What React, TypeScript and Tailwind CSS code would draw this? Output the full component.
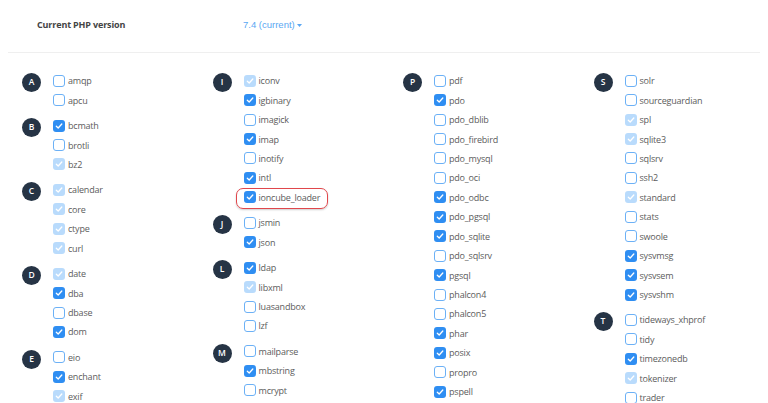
type State = 'on' | 'off' | 'dis';
type Item = { name: string; state: State; mark?: boolean };
type Group = { letter: string; items: Item[] };

const mk = (s: string): Item[] =>
  s.split(' ').map((t) => {
    const [name, st] = t.split(':');
    return { name, state: (st || 'off') as State };
  });

const columns: Group[][] = [
  [
    { letter: 'A', items: mk('amqp apcu') },
    { letter: 'B', items: mk('bcmath:on brotli bz2:dis') },
    { letter: 'C', items: mk('calendar:dis core:dis ctype:dis curl:dis') },
    { letter: 'D', items: mk('date:dis dba:on dbase dom:on') },
    { letter: 'E', items: mk('eio enchant:on exif:dis') },
  ],
  [
    {
      letter: 'I',
      items: [
        ...mk('iconv:dis igbinary:on imagick imap:on inotify intl:on'),
        { name: 'ioncube_loader', state: 'on', mark: true },
      ],
    },
    { letter: 'J', items: mk('jsmin json:on') },
    { letter: 'L', items: mk('ldap:on libxml:dis luasandbox lzf') },
    { letter: 'M', items: mk('mailparse mbstring:on mcrypt') },
  ],
  [
    {
      letter: 'P',
      items: mk(
        'pdf pdo:on pdo_dblib pdo_firebird pdo_mysql pdo_oci pdo_odbc:on pdo_pgsql:on pdo_sqlite:on pdo_sqlsrv pgsql:on phalcon4 phalcon5 phar:on posix:on propro pspell:on'
      ),
    },
  ],
  [
    {
      letter: 'S',
      items: mk(
        'solr sourceguardian spl:dis sqlite3:dis sqlsrv ssh2 standard:dis stats swoole sysvmsg:on sysvsem:on sysvshm:on'
      ),
    },
    { letter: 'T', items: mk('tideways_xhprof tidy timezonedb:on tokenizer:dis trader') },
  ],
];

function Box({ state }: { state: State }) {
  if (state === 'off') {
    return <span className="block w-[12px] h-[12px] rounded-[3px] border-[1.5px] border-[#6cb1f6] bg-white" />;
  }
  return (
    <span
      className={
        'flex items-center justify-center w-[12px] h-[12px] rounded-[3px] ' +
        (state === 'on' ? 'bg-[#2f8ef2]' : 'bg-[#b9dbfc]')
      }
    >
      <svg width="8" height="8" viewBox="0 0 8 8" fill="none">
        <path d="M1.3 4.2 L3.2 6 L6.8 2" stroke="white" strokeWidth="1.3" strokeLinecap="round" strokeLinejoin="round" />
      </svg>
    </span>
  );
}

export default function App() {
  return (
    <div className="bg-white w-[768px] h-[403px] overflow-hidden" style={{ fontFamily: '"Open Sans", sans-serif' }}>
      <div className="flex items-center h-[48px] pt-[2px]">
        <div className="w-[243px] shrink-0 pl-[37px] text-[9px] tracking-[-0.15px] font-bold text-[#444]">Current PHP version</div>
        <div className="flex items-center gap-[2px] text-[9.5px] text-[#5aa7f2]" style={{ fontFamily: '"Liberation Sans", sans-serif' }}>
          7.4 (current)
          <svg width="5" height="3" viewBox="0 0 5 3">
            <path d="M0 0 H5 L2.5 3 Z" fill="#5aa7f2" />
          </svg>
        </div>
      </div>
      <div className="mx-[8px] mt-[4px] border-t border-[#efefef]" />
      <div className="flex pl-[22px] pt-[18px]">
        {columns.map((col, ci) => (
          <div key={ci} className="w-[190.5px] shrink-0 flex flex-col gap-[6px]">
            {col.map((g) => (
              <div key={g.letter} className="flex">
                <div className="w-[31px] shrink-0 pt-[2px]">
                  <div className="w-[19px] h-[19px] rounded-full bg-[#263445] flex items-center justify-center text-white text-[8.5px] font-semibold">
                    {g.letter}
                  </div>
                </div>
                <div className="flex flex-col">
                  {g.items.map((it) => (
                    <div key={it.name} className="relative flex items-center h-[19.45px] gap-[3px]">
                      {it.mark && (
                        <span className="absolute left-[-8px] top-[0px] w-[92px] h-[21px] rounded-[7px] border-[1.5px] border-[#e0474c] shadow-[0_1px_2px_rgba(0,0,0,0.2)]" />
                      )}
                      <Box state={it.state} />
                      <span className="text-[9px] tracking-[-0.2px] text-[#5c5c5c] leading-none">{it.name}</span>
                    </div>
                  ))}
                </div>
              </div>
            ))}
          </div>
        ))}
      </div>
    </div>
  );
}
